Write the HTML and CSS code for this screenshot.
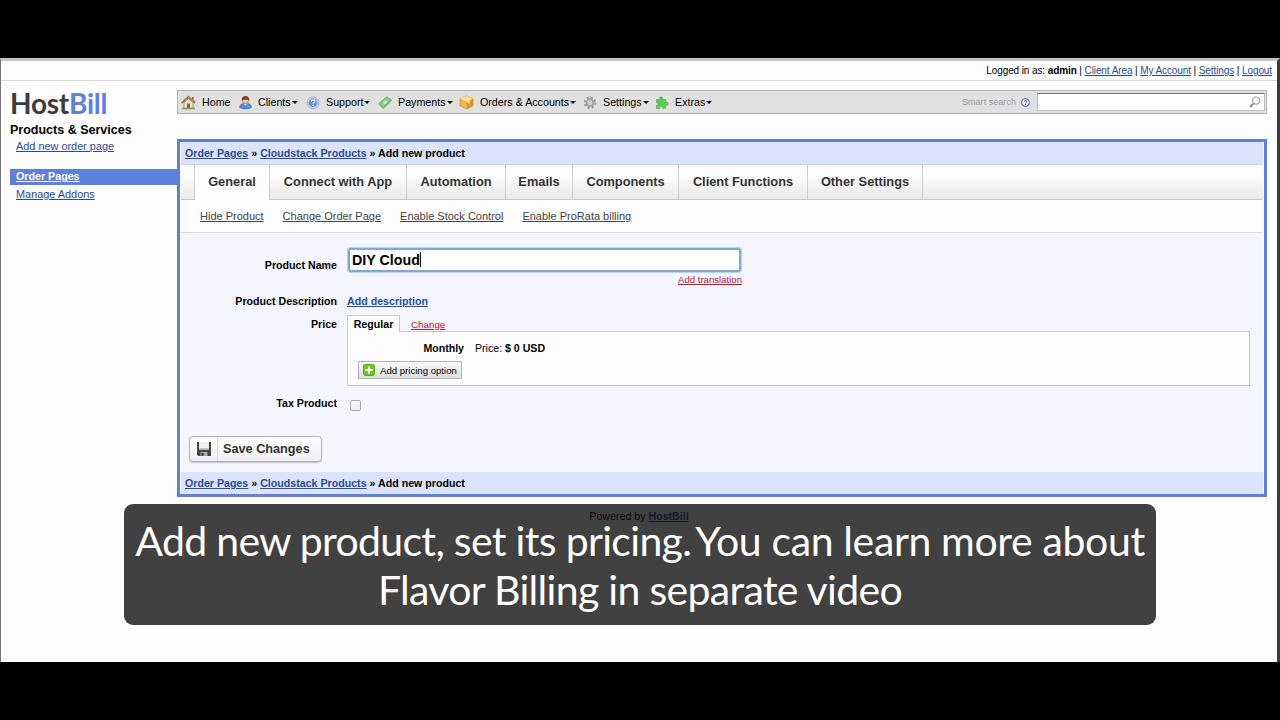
FILE: index.html
```html
<!DOCTYPE html>
<html lang="en">
<head>
    <meta charset="UTF-8">
    <meta name="viewport" content="width=device-width, initial-scale=1.0">
    <title>HostBill - Add new product</title>
    <link rel="stylesheet" href="styles.css">
</head>
<body>
    <div class="window">
        <div class="user-bar">
            <span>Logged in as: <b>admin</b> | <a href="#">Client Area</a> | <a href="#">My Account</a> | <a href="#">Settings</a> | <a href="#">Logout</a></span>
        </div>

        <div class="page">
            <!-- Left column -->
            <div class="sidebar">
                <div class="logo">Host<span>Bill</span></div>
                <h1>Products &amp; Services</h1>
                <a href="#" class="side-link">Add new order page</a>
                <a href="#" class="side-link active">Order Pages</a>
                <a href="#" class="side-link">Manage Addons</a>
            </div>

            <div class="main">
                <!-- Top menu -->
                <div class="menu">
                    <div class="menu-items">
                        <a class="menu-item">
                            <svg width="15" height="15" viewBox="0 0 15 15">
                                <path d="M1 13.5h13" stroke="#6aa85a" stroke-width="1.6"/>
                                <path d="M3 7.5l4.500-4 4.500 4V13H3z" fill="#f1e4c8" stroke="#a08a68" stroke-width=".8"/>
                                <path d="M11 2h1.600v3H11z" fill="#b0563a"/>
                                <path d="M.8 8L7.500 1.800 14.200 8" fill="none" stroke="#a8764c" stroke-width="2"/>
                                <path d="M6 8.500h3V13H6z" fill="#8a6248"/>
                            </svg>
                            <span>Home</span>
                        </a>
                        <a class="menu-item">
                            <svg width="13" height="15" viewBox="0 0 13 15">
                                <path d="M.7 12.500c0-3 2.200-4.200 5.800-4.200s5.800 1.200 5.800 4.200c-2 1.900-9.600 1.900-11.600 0z" fill="#4b8fe0" stroke="#2f68b4" stroke-width=".7"/>
                                <path d="M4.500 8.500l2 2 2-2z" fill="#fff"/>
                                <circle cx="6.500" cy="5.300" r="3.300" fill="#f5c795" stroke="#a0643a" stroke-width=".6"/>
                                <path d="M2.700 5.500C2.500 2.500 4 .9 6.500.9s4 1.600 3.800 4.600C9 4.200 4.500 4.700 2.700 5.500z" fill="#7c4526"/>
                            </svg>
                            <span>Clients<i></i></span>
                        </a>
                        <a class="menu-item">
                            <svg width="14" height="15" viewBox="0 0 14 15">
                                <circle cx="7" cy="7.800" r="5.900" fill="#c3d4ea" stroke="#a5b7d0"/>
                                <circle cx="7" cy="7.800" r="4.300" fill="#6795d2"/>
                                <path d="M5.400 6.500c0-2.200 3.400-2.100 3.300 0 0 1.200-1.600 1.200-1.600 2.300" fill="none" stroke="#fff" stroke-width="1.300"/>
                                <circle cx="7.100" cy="10.400" r=".8" fill="#fff"/>
                            </svg>
                            <span>Support<i></i></span>
                        </a>
                        <a class="menu-item">
                            <svg width="14" height="14" viewBox="0 0 15 15">
                                <path d="M1 9L9.500 2l4.700 3.500-8.500 7.900z" fill="#86cf86" stroke="#4e9f58" stroke-width=".8"/>
                                <path d="M1 9v1.300l4.700 4.200 8.500-7.800V5.500" fill="none" stroke="#5dae62" stroke-width=".8"/>
                                <ellipse cx="7.700" cy="7.700" rx="2.200" ry="1.700" fill="#c4ecbc" transform="rotate(-40 7.700 7.700)"/>
                            </svg>
                            <span>Payments<i></i></span>
                        </a>
                        <a class="menu-item">
                            <svg width="15" height="15" viewBox="0 0 15 15">
                                <path d="M7.500 1L14 3.800v7L7.800 14 1 10.800v-7z" fill="#f2b545" stroke="#c98a2a" stroke-width=".7"/>
                                <path d="M7.500 1L14 3.800 7.800 6.800 1 3.800z" fill="#fbdc8a"/>
                                <path d="M7.800 6.800L14 3.800v7L7.800 14z" fill="#dc9630"/>
                                <path d="M4 2.500l6.500 3v3.200L8.700 8V6.300L2.500 3.300z" fill="#fff0c2"/>
                            </svg>
                            <span>Orders &amp; Accounts<i></i></span>
                        </a>
                        <a class="menu-item">
                            <svg width="14" height="15" viewBox="0 0 14 15">
                                <circle cx="7" cy="7.700" r="5.200" fill="none" stroke="#999" stroke-width="2.200" stroke-dasharray="2.200 1.884"/>
                                <circle cx="7" cy="7.700" r="3.400" fill="#dedede" stroke="#a2a2a2" stroke-width="1.900"/>
                                <circle cx="7" cy="7.700" r="1.300" fill="#f4f4f4" stroke="#999" stroke-width=".6"/>
                            </svg>
                            <span>Settings<i></i></span>
                        </a>
                        <a class="menu-item">
                            <svg width="14" height="15" viewBox="0 0 14 15">
                                <path d="M1.500 4.500h3C3.500 1 8.500 1 7.700 4.500h3v2.700c3.400-.9 3.400 4 0 3.100v3.200H7.800c.5-2.700-3.500-2.700-3 0H1.500v-3.200c2.300.2 2.300-2.800 0-2.600z" fill="#5fcb55" stroke="#4db048" stroke-width=".6"/>
                            </svg>
                            <span>Extras<i></i></span>
                        </a>
                    </div>
                    <div class="search">
                        <span>Smart search</span>
                        <svg width="9" height="9" viewBox="0 0 9 9">
                            <circle cx="4.500" cy="4.500" r="3.800" fill="#f4f6ff" stroke="#5570cc" stroke-width="1.100"/>
                            <path d="M3.300 3.700c0-1.600 2.500-1.500 2.400 0 0 .8-1.200.8-1.200 1.700M4.500 6.100v.9" fill="none" stroke="#3c56b8" stroke-width=".9"/>
                        </svg>
                        <div class="search-box">
                            <svg width="12" height="12" viewBox="0 0 12 12">
                                <circle cx="7.200" cy="4.600" r="3.600" fill="#f2f2f6" stroke="#a0a0a8" stroke-width="1.100"/>
                                <path d="M4.500 7.400L1 11" stroke="#8c8c92" stroke-width="2"/>
                            </svg>
                        </div>
                    </div>
                </div>

                <!-- Product editor -->
                <div class="panel">
                    <div class="breadcrumb">
                        <a href="#">Order Pages</a> » <a href="#">Cloudstack Products</a> » Add new product
                    </div>
                    <div class="tabs">
                        <div class="tab-gap"></div>
                        <div class="tab active">General</div>
                        <div class="tab">Connect with App</div>
                        <div class="tab">Automation</div>
                        <div class="tab">Emails</div>
                        <div class="tab">Components</div>
                        <div class="tab">Client Functions</div>
                        <div class="tab">Other Settings</div>
                        <div class="tab-rest"></div>
                    </div>
                    <div class="sub-links">
                        <a href="#">Hide Product</a>
                        <a href="#">Change Order Page</a>
                        <a href="#">Enable Stock Control</a>
                        <a href="#">Enable ProRata billing</a>
                    </div>

                    <div class="form">
                        <div class="row row-name">
                            <label>Product Name</label>
                            <div class="name-field">
                                <div class="name-input">DIY Cloud<span class="caret"></span></div>
                                <a href="#" class="red-link">Add translation</a>
                            </div>
                        </div>
                        <div class="row row-desc">
                            <label>Product Description</label>
                            <a href="#" class="desc-link">Add description</a>
                        </div>
                        <div class="row row-price">
                            <label>Price</label>
                            <div class="price">
                                <div class="price-tabs">
                                    <div class="price-tab">Regular</div>
                                    <a href="#" class="red-link">Change</a>
                                </div>
                                <div class="price-box">
                                    <div class="price-line">
                                        <b class="period">Monthly</b>
                                        <span>Price: <b>$ 0 USD</b></span>
                                    </div>
                                    <div class="add-price">
                                        <svg width="12" height="12" viewBox="0 0 12 12">
                                            <rect x=".5" y=".5" width="11" height="11" rx="2" fill="#6cc81e" stroke="#58a818"/>
                                            <path d="M6 2.500v7M2.500 6h7" stroke="#fff" stroke-width="2"/>
                                        </svg>
                                        <span>Add pricing option</span>
                                    </div>
                                </div>
                            </div>
                        </div>
                        <div class="row row-tax">
                            <label>Tax Product</label>
                            <div class="checkbox"></div>
                        </div>
                        <div class="save">
                            <div class="save-icon">
                                <svg width="14" height="14" viewBox="0 0 14 14">
                                    <path d="M0 0h14v14H1.500L0 12.500z" fill="#444"/>
                                    <path d="M2 0h10v7.500H2z" fill="#f0f0f0"/>
                                    <path d="M2 6h10v1.500H2z" fill="#c4c4c4"/>
                                    <path d="M3.500 10h7v4h-7z" fill="#aaa"/>
                                    <path d="M4.500 11h2v3h-2z" fill="#333"/>
                                </svg>
                            </div>
                            <span>Save Changes</span>
                        </div>
                    </div>

                    <div class="breadcrumb">
                        <a href="#">Order Pages</a> » <a href="#">Cloudstack Products</a> » Add new product
                    </div>
                </div>
            </div>
        </div>

        <div class="powered">Powered by <a href="#">HostBill</a></div>
    </div>

    <div class="caption">
        <div class="line-one">
            <span>Add new product, set its pricing.</span>
            <span class="tail">You can learn more about</span>
        </div>
        <div class="line-two">Flavor Billing in separate video</div>
    </div>
</body>
</html>
```
FILE: styles.css
```css
* {
    box-sizing: border-box;
}

body {
    margin: 0;
    padding: 58px 0;
    height: 720px;
    overflow: hidden;
    position: relative;
    background-color: #000;
    color: #000;
    font-family: "Liberation Sans", Arial, sans-serif;
    font-size: 10.65px;
}

svg {
    display: block;
    flex: none;
}

a {
    color: #2c4a94;
}

.window {
    height: 604px;
    background-color: #fdfdfd;
    border-top: 3px solid #c4c4c4;
    border-left: 1px solid #777;
    border-right: 3px solid #3a3a3a;
}

.user-bar {
    height: 20px;
    border-bottom: 1px solid #d9d9d9;
    padding-right: 5px;
    text-align: right;
    line-height: 20px;
    font-size: 10px;
    letter-spacing: -0.1px;
}

.page {
    display: flex;
}

/* sidebar */
.sidebar {
    width: 176px;
    padding: 9px 0 0 8px;
}

.logo {
    height: 30px;
    line-height: 26px;
    padding-left: 1px;
    font-family: Lato, sans-serif;
    font-size: 28px;
    font-weight: bold;
    letter-spacing: -0.25px;
    color: #3c3c3c;
}

.logo span {
    color: #5f80dc;
}

.sidebar h1 {
    margin: 2px 0 0 1px;
    font-size: 12.5px;
    line-height: 16px;
}

.side-link {
    display: block;
    margin: 2px 0 0 1px;
    padding-left: 6px;
    height: 16px;
    font-size: 10.9px;
    line-height: 15px;
}

.sidebar h1 + .side-link {
    margin-top: 1px;
}

.side-link.active {
    margin-top: 14px;
    background-color: #5e80dd;
    color: #fff;
    font-weight: bold;
    font-size: 10.7px;
}

.main {
    width: 1090px;
    padding-top: 9px;
}

/* menu */
.menu {
    display: flex;
    justify-content: space-between;
    align-items: center;
    height: 24px;
    padding: 0 1px 0 3px;
    border: 1px solid #b5b5b5;
    background-color: #e0e0e0;
}

.menu-items {
    display: grid;
    grid-template-columns: 58px 67px 72px 81px 124px 72px 60px;
}

.menu-item {
    display: flex;
    align-items: center;
    justify-content: flex-start;
    gap: 6px;
    color: #000;
    font-size: 10.7px;
    line-height: 14px;
    white-space: nowrap;
}

.menu-item span {
    margin-top: -1px;
}

.menu-item i {
    display: inline-block;
    margin-left: 1px;
    vertical-align: 2px;
    border: 3px solid transparent;
    border-top-color: #000;
    border-bottom: 0;
}

.search {
    display: flex;
    align-items: center;
    color: #999;
    font-size: 9.1px;
}

.search > svg {
    margin: 0 7px 0 5px;
}

.search-box {
    width: 228px;
    height: 18px;
    padding: 2px 3px 0 0;
    background-color: #fff;
    border: 1px solid #bbb;
    border-top-color: #777;
    display: flex;
    justify-content: flex-end;
}

/* panel */
.panel {
    height: 358px;
    margin-top: 25px;
    border: 3px solid #5f80d6;
    padding: 0 1px;
}

.breadcrumb {
    height: 22px;
    padding-left: 4px;
    line-height: 22px;
    font-weight: bold;
    background-color: #dae5fd;
}

.tabs {
    display: grid;
    grid-template-columns: 14px 75px 137px 99px 67px 106px 129px 115px 1fr;
    height: 36px;
    border-top: 1px solid #ccd4e4;
    line-height: 34px;
    font-size: 12.8px;
    font-weight: bold;
    color: #333;
    text-align: center;
}

.tab,
.tab-gap,
.tab-rest {
    border-right: 1px solid #d0d0d4;
    border-bottom: 1px solid #c6c6c8;
    background: linear-gradient(#fdfdfd 30%, #e9e8ea);
}

.tab.active {
    background: #fdfdfd;
    border-bottom-color: #fdfdfd;
}

.tab-rest {
    border-right: 0;
}

.sub-links {
    display: flex;
    height: 33px;
    padding-left: 19px;
    gap: 19px;
    border-bottom: 1px solid #dcdce4;
    line-height: 32px;
    font-size: 11px;
}

.sub-links a {
    color: #444;
}

.form {
    height: 239px;
    background-color: #f5f5fe;
    padding-top: 15px;
}

.row {
    display: flex;
}

.row label {
    width: 156px;
    margin-right: 10px;
    text-align: right;
    font-weight: bold;
    line-height: 14px;
}

.row-name {
    height: 46px;
}

.row-name label {
    padding-top: 10px;
}

.name-field {
    width: 395px;
    text-align: right;
}

.name-input {
    height: 24px;
    display: flex;
    align-items: center;
    margin: 0 1px 1px;
    padding: 0 0 1px 2px;
    background-color: #fff;
    border: 2px solid #84a8d4;
    outline: 1px solid #b4d6f4;
    border-radius: 2px;
    font-size: 14.3px;
    font-weight: bold;
}

.caret {
    width: 1px;
    height: 15px;
    background-color: #000;
}

.red-link {
    color: #c41230;
    font-size: 9.6px;
    line-height: 14px;
}

.desc-link {
    font-weight: bold;
    line-height: 14px;
    color: #2450a0;
}

.row-desc {
    height: 21px;
}

.row-price {
    height: 71px;
}

.row-price label {
    padding-top: 2px;
}

.price {
    width: 903px;
}

.price-tabs {
    display: flex;
    height: 16px;
    gap: 11px;
}

.price-tabs .red-link {
    line-height: 20px;
    font-size: 9.8px;
}

.price-tab {
    height: 17px;
    width: 53px;
    border: 1px solid #c8c8d4;
    border-bottom: 0;
    background-color: #fdfdfd;
    text-align: center;
    font-weight: bold;
    line-height: 17px;
    /* sits over the top border of the box below */
    position: relative;
}

.price-box {
    height: 55px;
    border: 1px solid #c8c8d4;
    background-color: #fdfdfd;
    padding: 9px 0 0 10px;
}

.price-line {
    display: flex;
    font-size: 10.6px;
    line-height: 14px;
}

.period {
    width: 106px;
    margin-right: 11px;
    text-align: right;
}

.add-price {
    display: flex;
    align-items: center;
    width: 104px;
    height: 18px;
    margin-top: 6px;
    padding-left: 4px;
    gap: 5px;
    border: 1px solid #b4b4b8;
    background: linear-gradient(#fafafa, #e0e0e2);
    font-size: 9.6px;
    white-space: nowrap;
}

.row-tax {
    height: 50px;
}

.row-tax label {
    padding-top: 10px;
}

.checkbox {
    width: 11px;
    height: 11px;
    margin: 14px 0 0 3px;
    border: 1px solid #a8a8ac;
    border-radius: 2px;
    background: linear-gradient(#fff, #ececec);
}

.save {
    display: flex;
    align-items: center;
    width: 133px;
    height: 26px;
    margin-left: 8px;
    border: 1px solid #b4b4b8;
    border-radius: 4px;
    background: linear-gradient(#fff, #efeff1);
    box-shadow: 0 1px 1px rgba(0, 0, 0, 0.2);
    color: #333;
    font-size: 12.7px;
    font-weight: bold;
}

.save-icon {
    width: 28px;
    height: 24px;
    margin-right: 5px;
    padding: 5px 0 0 7px;
    border-right: 1px solid #ddd;
}

.powered {
    margin-top: 12px;
    text-align: center;
    line-height: 14px;
}

.powered a {
    font-weight: bold;
}

/* caption over the page */
.caption {
    position: absolute;
    left: 124px;
    top: 504px;
    width: 1032px;
    height: 121px;
    padding-top: 12px;
    border-radius: 9px;
    background-color: rgba(12, 12, 12, 0.78);
    color: #fff;
    font-family: "Gill Sans", Lato, sans-serif;
    font-size: 41px;
    line-height: 49px;
    letter-spacing: -0.68px;
    text-align: center;
    white-space: nowrap;
}

.line-one {
    display: flex;
    justify-content: center;
    gap: 4px;
}

.line-one .tail {
    letter-spacing: -0.37px;
}
```
